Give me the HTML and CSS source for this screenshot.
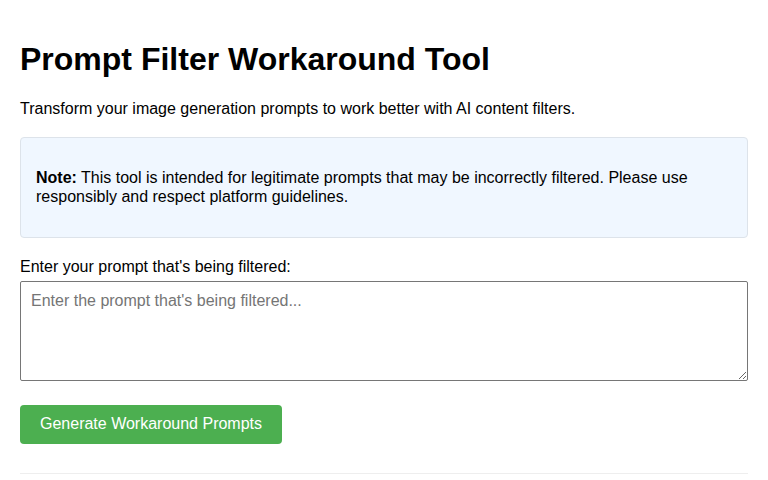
FILE: index.html
```html
<!DOCTYPE html>
<html lang="en">
<head>
  <meta charset="UTF-8">
  <title>Prompt Filter Workaround Tool</title>
  <link rel="stylesheet" href="styles.css">
</head>
<body>
  <h1>Prompt Filter Workaround Tool</h1>
  <p class="intro">Transform your image generation prompts to work better with AI content filters.</p>

  <div class="note">
    <p><strong>Note:</strong> This tool is intended for legitimate prompts that may be incorrectly filtered. Please use responsibly and respect platform guidelines.</p>
  </div>

  <label for="prompt" class="field-label">Enter your prompt that's being filtered:</label>
  <textarea id="prompt" class="prompt-input" placeholder="Enter the prompt that's being filtered..."></textarea>

  <button type="button" class="button">Generate Workaround Prompts</button>

  <div class="results"></div>
</body>
</html>
```

FILE: styles.css
```css
body {
  margin: 0;
  padding: 20px;
  font-family: "Liberation Sans", Arial, sans-serif;
  font-size: 16px;
  line-height: 1.15;
  color: #000;
}
h1 {
  font-size: 32px;
  margin: 21px 0 22px;
}
.intro {
  margin: 0 0 19px;
}
.note {
  background: #f0f7ff;
  border: 1px solid #dde3ea;
  border-radius: 4px;
  padding: 15px;
  margin-bottom: 20px;
}
.field-label {
  display: block;
  margin-bottom: 5px;
}
.prompt-input {
  display: block;
  box-sizing: border-box;
  width: 100%;
  height: 100px;
  padding: 10px;
  margin: 0 0 24px;
  border: 1px solid #767676;
  border-radius: 2px;
  font-family: "Liberation Sans", Arial, sans-serif;
  font-size: 16px;
  line-height: 1.15;
}
.prompt-input::placeholder {
  color: #757575;
}
.button {
  cursor: pointer;
  border: none;
  border-radius: 4px;
  padding: 10px 20px;
  font-family: "Liberation Sans", Arial, sans-serif;
  font-size: 16px;
  line-height: 1.15;
  color: #fff;
  background: #4caf50;
}
.results {
  margin-top: 29px;
  border-top: 1px solid #eee;
}
```
